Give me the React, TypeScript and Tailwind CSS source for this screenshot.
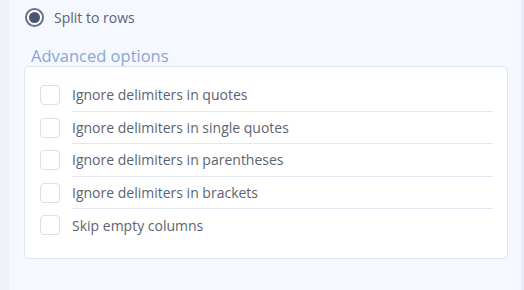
import React from "react";

const rows = [
  "Ignore delimiters in quotes",
  "Ignore delimiters in single quotes",
  "Ignore delimiters in parentheses",
  "Ignore delimiters in brackets",
  "Skip empty columns",
];

export default function App() {
  return (
    <div
      className="flex w-[524px] h-[290px] overflow-hidden"
      style={{ fontFamily: '"Open Sans", "Noto Sans", sans-serif' }}
    >
      <div className="w-[9px] bg-[#eef2fb]" />
      <div className="flex-1 bg-[#f5f8fe] pl-[15px] pt-[8px]">
        <div className="flex items-center h-[19px]">
          <div className="ml-[1px] w-[19px] h-[19px] rounded-full border-2 border-[#6b7384] bg-white flex items-center justify-center">
            <div className="w-[11px] h-[11px] rounded-full bg-[#4a5571]" />
          </div>
          <span className="ml-[10px] text-[14px] text-[#5c6373] leading-[19px]">Split to rows</span>
        </div>
        <div className="mt-[18px] h-[21px] pl-[7px] text-[16.5px] leading-[21px] text-[#8aa6d6]">
          Advanced options
        </div>
        <div className="w-[484px] h-[193px] bg-white border border-[#dde3ef] rounded-[5px] pt-[12px]">
          {rows.map((r, i) => (
            <div key={r} className="flex items-center h-[32.5px]">
              <div className="ml-[15px] w-[20px] h-[20px] shrink-0 rounded-[4px] border border-[#d9e0ec] bg-white" />
              <div
                className={
                  "ml-[12px] mr-[14px] flex-1 h-full flex items-center text-[14px] text-[#5c6373] " +
                  (i < rows.length - 1 ? "border-b border-[#e1e6f2]" : "")
                }
              >
                {r}
              </div>
            </div>
          ))}
        </div>
      </div>
      <div className="w-[3px] bg-[#e8edf7]" />
    </div>
  );
}
